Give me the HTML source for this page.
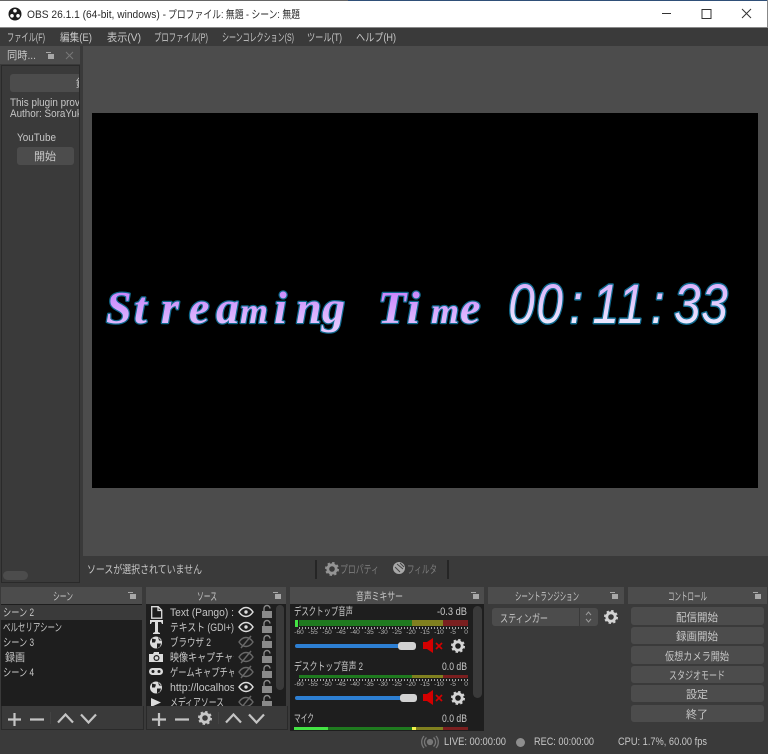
<!DOCTYPE html>
<html><head><meta charset="utf-8">
<style>
html,body{margin:0;padding:0;background:#3a3a3a}
#r{position:relative;width:768px;height:754px;overflow:hidden;background:#3a3a3a;font-family:"Liberation Sans","Noto Sans CJK JP",sans-serif}
.a{position:absolute}
.p{background:#4c4c4c;border-radius:3px}
svg{position:absolute;left:0;top:0}
text{font-family:"Liberation Sans","Noto Sans CJK JP",sans-serif;font-size:11px;fill:#c6c6c6}
.tt text,text.tt{fill:#2a2a2a}
.s text{font-size:6.500px;fill:#b4b4b4;text-anchor:middle}
.big text{font-family:"Liberation Serif",serif;font-style:italic;font-weight:bold;stroke:#0f6a8e;stroke-width:2.500px;paint-order:stroke;stroke-linejoin:round}
.big text.d{font-family:"Liberation Sans",sans-serif;font-weight:normal;stroke-width:3px}
</style></head><body>
<div id="r">
<div class="a" style="left:0;top:0;width:768px;height:28px;background:#fff"></div>
<div class="a" style="left:0;top:0;width:348px;height:1px;background:#666"></div>
<div class="a" style="left:348px;top:0;width:420px;height:1px;background:#2f4f78"></div>
<div class="a" style="left:0;top:27px;width:768px;height:1px;background:#8a8a8a"></div>
<div class="a" style="left:767px;top:0;width:1px;height:28px;background:#888"></div>
<div class="a" style="left:83px;top:46px;width:685px;height:510px;background:#4c4c4c"></div>
<div class="a" style="left:92px;top:113px;width:666px;height:375px;background:#000"></div>
<div class="a" style="left:0;top:46px;width:80px;height:18px;background:#4c4c4c"></div>
<div class="a" style="left:1px;top:65px;width:77px;height:516px;background:#3a3a3a;border:1px solid #2a2a2a"></div>
<div class="a p" style="left:10px;top:74px;width:69px;height:18px;border-radius:3px 0 0 3px"></div>
<div class="a p" style="left:17px;top:147px;width:57px;height:18px"></div>
<div class="a" style="left:3px;top:571px;width:25px;height:9px;background:#4c4c4c;border-radius:5px"></div>
<div class="a" style="left:315px;top:560px;width:2px;height:19px;background:#252525"></div>
<div class="a" style="left:447px;top:560px;width:2px;height:19px;background:#252525"></div>
<div class="a" style="left:1px;top:587px;width:141px;height:17px;background:#4c4c4c"></div>
<div class="a" style="left:146px;top:587px;width:140px;height:17px;background:#4c4c4c"></div>
<div class="a" style="left:290px;top:587px;width:194px;height:17px;background:#4c4c4c"></div>
<div class="a" style="left:488px;top:587px;width:136px;height:17px;background:#4c4c4c"></div>
<div class="a" style="left:628px;top:587px;width:139px;height:17px;background:#4c4c4c"></div>
<div class="a" style="left:1px;top:604px;width:141px;height:102px;background:#1e1e1e"></div>
<div class="a" style="left:1px;top:605px;width:141px;height:15px;background:#3a3a3a"></div>
<div class="a" style="left:1px;top:706px;width:141px;height:23px;border:1px solid #2a2a2a;border-top:0"></div>
<div class="a" style="left:146px;top:604px;width:140px;height:102px;background:#1e1e1e"></div>
<div class="a" style="left:276px;top:605px;width:8px;height:85px;background:#3a3a3a;border-radius:4px"></div>
<div class="a" style="left:146px;top:706px;width:140px;height:23px;border:1px solid #2a2a2a;border-top:0"></div>
<div class="a" style="left:290px;top:604px;width:194px;height:127px;background:#1e1e1e"></div>
<div class="a" style="left:473px;top:606px;width:9px;height:92px;background:#3a3a3a;border-radius:5px"></div>
<!-- meters -->
<div class="a" style="left:299px;top:620px;width:113px;height:6px;background:#1f7a1f"></div>
<div class="a" style="left:412px;top:620px;width:31px;height:6px;background:#80801f"></div>
<div class="a" style="left:443px;top:620px;width:25px;height:6px;background:#7a1f1f"></div>
<div class="a" style="left:295px;top:620px;width:3px;height:7px;background:#44e444"></div>
<div class="a" style="left:299px;top:627px;width:169px;height:2px;background:repeating-linear-gradient(90deg,#aaa 0 1px,transparent 1px 3px)"></div>
<div class="a" style="left:295px;top:644px;width:105px;height:4px;background:#2d7fd3;border-radius:2px"></div>
<div class="a" style="left:398px;top:642px;width:18px;height:8px;background:#d2d2d2;border-radius:3px"></div>
<div class="a" style="left:299px;top:675px;width:113px;height:3px;background:#1f7a1f"></div>
<div class="a" style="left:412px;top:675px;width:31px;height:3px;background:#80801f"></div>
<div class="a" style="left:443px;top:675px;width:25px;height:3px;background:#7a1f1f"></div>
<div class="a" style="left:299px;top:679px;width:169px;height:2px;background:repeating-linear-gradient(90deg,#aaa 0 1px,transparent 1px 3px)"></div>
<div class="a" style="left:295px;top:696px;width:107px;height:4px;background:#2d7fd3;border-radius:2px"></div>
<div class="a" style="left:400px;top:694px;width:17px;height:8px;background:#d2d2d2;border-radius:3px"></div>
<div class="a" style="left:294px;top:727px;width:34px;height:3px;background:#44e444"></div>
<div class="a" style="left:328px;top:727px;width:84px;height:3px;background:#1f7a1f"></div>
<div class="a" style="left:412px;top:727px;width:4px;height:3px;background:#f2f24a"></div>
<div class="a" style="left:416px;top:727px;width:27px;height:3px;background:#80801f"></div>
<div class="a" style="left:443px;top:727px;width:25px;height:3px;background:#7a1f1f"></div>
<!-- transition + controls -->
<div class="a p" style="left:492px;top:608px;width:106px;height:18px"></div>
<div class="a" style="left:579px;top:608px;width:1px;height:18px;background:#3a3a3a"></div>
<div class="a p" style="left:631px;top:607px;width:133px;height:18px"></div>
<div class="a p" style="left:631px;top:627px;width:133px;height:17px"></div>
<div class="a p" style="left:631px;top:646px;width:133px;height:18px"></div>
<div class="a p" style="left:631px;top:666px;width:133px;height:17px"></div>
<div class="a p" style="left:631px;top:685px;width:133px;height:17px"></div>
<div class="a p" style="left:631px;top:705px;width:133px;height:17px"></div>
<div class="a" style="left:516px;top:737.5px;width:9px;height:9px;border-radius:50%;background:#8e8e8e"></div>

<svg width="768" height="754" viewBox="0 0 768 754">
<defs>
<linearGradient id="g1" x1="0" y1="0" x2=".15" y2="1"><stop offset="0" stop-color="#c274fb"/><stop offset="1" stop-color="#e4c8ff"/></linearGradient>
<linearGradient id="g2" x1="0" y1="0" x2="0" y2="1"><stop offset="0" stop-color="#d6a4fb"/><stop offset="1" stop-color="#f0f8ff"/></linearGradient>
<clipPath id="cl"><rect x="0" y="60" width="79" height="100"/></clipPath>
<clipPath id="cs"><rect x="146" y="604" width="88" height="102"/></clipPath>
<clipPath id="ci"><rect x="146" y="604" width="130" height="102"/></clipPath>
<g id="gear"><circle r="4.200" fill="none" stroke="currentColor" stroke-width="2.800"/><circle r="6" fill="none" stroke="currentColor" stroke-width="2" stroke-dasharray="2.400 2.310"/></g>
<g id="eye" fill="none" stroke="#dcdcdc" stroke-width="1.500"><path d="M-7 0c4-6 10-6 14 0-4 6-10 6-14 0z"/><circle r="1.700" fill="#dcdcdc" stroke="none"/></g>
<g id="eyeoff" fill="none" stroke="#686868" stroke-width="1.400"><path d="M-7 0c4-6 10-6 14 0-4 6-10 6-14 0zM-5 6L5-6"/></g>
<g id="lock"><rect x="-5" y="-1" width="10" height="7" fill="#8a8a8a"/><path d="M-3 -1v-2.500a3 3 0 0 1 6 0" fill="none" stroke="#8a8a8a" stroke-width="1.400"/></g>
<path id="fl" d="M0 0h5v1H0zM2 2h6v5H2z" fill="#a8a8a8"/>
<g id="globe"><circle r="6" fill="#dcdcdc"/><path d="M-4-4l4 1-1 3-3 0zM1 1l4 0-1 3-3 2zM2-6l2 3 2 1-3 0z" fill="#1e1e1e"/></g>
</defs>

<!-- title bar -->
<circle cx="15" cy="14" r="6.500" fill="#1b1b1b"/><circle cx="15" cy="10.800" r="1.800" fill="#fff"/><circle cx="12" cy="15.800" r="1.800" fill="#fff"/><circle cx="18" cy="15.800" r="1.800" fill="#fff"/><circle cx="15" cy="14" r="1.600" fill="#1b1b1b"/>
<text class="tt" x="27" y="18" textLength="139" lengthAdjust="spacingAndGlyphs">OBS 26.1.1 (64-bit, windows) -</text>
<text class="tt" x="168" y="18" textLength="132" lengthAdjust="spacingAndGlyphs">プロファイル: 無題 - シーン: 無題</text>
<path d="M662 13.500H671M702 9.500h9v9h-9zM742 9L751 18M751 9L742 18" stroke="#333" fill="none"/>

<!-- menu -->
<text x="7" y="41" textLength="38" lengthAdjust="spacingAndGlyphs">ファイル(F)</text>
<text x="60" y="41" textLength="32" lengthAdjust="spacingAndGlyphs">編集(E)</text>
<text x="107" y="41" textLength="34" lengthAdjust="spacingAndGlyphs">表示(V)</text>
<text x="154" y="41" textLength="54" lengthAdjust="spacingAndGlyphs">プロファイル(P)</text>
<text x="222" y="41" textLength="72" lengthAdjust="spacingAndGlyphs">シーンコレクション(S)</text>
<text x="307" y="41" textLength="35" lengthAdjust="spacingAndGlyphs">ツール(T)</text>
<text x="356" y="41" textLength="40" lengthAdjust="spacingAndGlyphs">ヘルプ(H)</text>

<!-- preview -->
<g class="big">
<text y="323" style="font-size:46px;fill:url(#g1)" x="106 134 161 189 216"><tspan>Strea</tspan><tspan x="240" style="font-size:36px">m</tspan><tspan x="274 296 322">ing</tspan></text>
<text y="323" style="font-size:46px;fill:url(#g1)" x="378 407"><tspan>Ti</tspan><tspan x="431" style="font-size:36px">m</tspan><tspan x="460">e</tspan></text>
<text class="d" transform="scale(.85 1)" y="323" style="font-size:56px;fill:url(#g2)" x="598 631 670 697 727 766 793 825">00:11:33</text>
</g>

<!-- left dock -->
<text x="7" y="59" textLength="29" lengthAdjust="spacingAndGlyphs">同時...</text>
<use href="#fl" x="46" y="52"/>
<path d="M66 52l7 7M73 52l-7 7" stroke="#777" fill="none"/>
<g clip-path="url(#cl)">
<text x="76" y="87">録画</text>
<text x="10" y="106" textLength="88" lengthAdjust="spacingAndGlyphs">This plugin provides</text>
<text x="10" y="117" textLength="74" lengthAdjust="spacingAndGlyphs">Author: SoraYuki</text>
</g>
<text x="17" y="141" textLength="39" lengthAdjust="spacingAndGlyphs">YouTube</text>
<text x="34" y="160">開始</text>

<!-- controls bar -->
<text x="87" y="573" textLength="115" lengthAdjust="spacingAndGlyphs">ソースが選択されていません</text>
<use href="#gear" x="332" y="569" style="color:#949494"/>
<text x="340" y="573" textLength="39" lengthAdjust="spacingAndGlyphs" style="fill:#7c7c7c">プロパティ</text>
<circle cx="399" cy="568" r="6" fill="#a8a8a8"/><path d="M395 567l5 5M397 564l6 5M400 563l4 4" stroke="#444"/>
<text x="407" y="573" textLength="30" lengthAdjust="spacingAndGlyphs" style="fill:#7c7c7c">フィルタ</text>

<!-- dock titles -->
<text x="53" y="600" textLength="20" lengthAdjust="spacingAndGlyphs">シーン</text>
<text x="197" y="600" textLength="20" lengthAdjust="spacingAndGlyphs">ソース</text>
<text x="356" y="600" textLength="47" lengthAdjust="spacingAndGlyphs">音声ミキサー</text>
<text x="515" y="600" textLength="64" lengthAdjust="spacingAndGlyphs">シーントランジション</text>
<text x="668" y="600" textLength="39" lengthAdjust="spacingAndGlyphs">コントロール</text>
<use href="#fl" x="128" y="592"/><use href="#fl" x="273" y="592"/><use href="#fl" x="471" y="592"/><use href="#fl" x="610" y="592"/><use href="#fl" x="753" y="592"/>

<!-- scenes -->
<text x="3" y="616" textLength="31" lengthAdjust="spacingAndGlyphs">シーン 2</text>
<text x="3" y="631" textLength="59" lengthAdjust="spacingAndGlyphs">ベルセリアシーン</text>
<text x="3" y="646" textLength="31" lengthAdjust="spacingAndGlyphs">シーン 3</text>
<text x="5" y="661" textLength="20" lengthAdjust="spacingAndGlyphs">録画</text>
<text x="3" y="676" textLength="31" lengthAdjust="spacingAndGlyphs">シーン 4</text>

<!-- toolbars -->
<g fill="none" stroke="#c4c4c4" stroke-width="2.200">
<path d="M14.500 713v13M8 719.500h13M30 719.500h14M58 722.500l7.500-8 7.500 8M81 714.500l7.500 8 7.500-8"/>
<path d="M159 713v13M152 719.500h14M175 719.500h14M226 722.500l7.500-8 7.500 8M249 714.500l7.500 8 7.500-8"/>
</g>
<use href="#gear" x="205" y="718" style="color:#c8c8c8"/>
<path d="M50.500 712v12M218.500 712v12" stroke="#444"/>

<!-- sources -->
<g clip-path="url(#cs)">
<text x="170" y="616" textLength="64" lengthAdjust="spacingAndGlyphs">Text (Pango) :</text>
<text x="170" y="631" textLength="64" lengthAdjust="spacingAndGlyphs">テキスト (GDI+)</text>
<text x="170" y="646" textLength="41" lengthAdjust="spacingAndGlyphs">ブラウザ 2</text>
<text x="170" y="661" textLength="99" lengthAdjust="spacingAndGlyphs">映像キャプチャデバイス</text>
<text x="170" y="676" textLength="66" lengthAdjust="spacingAndGlyphs">ゲームキャプチャ</text>
<text x="170" y="691" textLength="68" lengthAdjust="spacingAndGlyphs">http://localhost</text>
<text x="170" y="706" textLength="54" lengthAdjust="spacingAndGlyphs">メディアソース</text>
</g>
<g clip-path="url(#ci)">
<path d="M151.700 606.700h6.500l3.500 3.500v8h-10zM158 606.700v3.800h3.700" fill="none" stroke="#dcdcdc" stroke-width="1.300"/>
<path d="M150 620h13v4h-1l-1-2h-3v10l2 1v1h-7v-1l2-1v-10h-3l-1 2h-1z" fill="#dcdcdc"/>
<use href="#globe" x="156" y="642.500"/>
<path d="M149 654h4l1-2h5v2h4v8h-14z" fill="#dcdcdc"/><circle cx="156.500" cy="658" r="3" fill="#1e1e1e"/><circle cx="156.500" cy="658" r="1.800" fill="#dcdcdc"/>
<rect x="149" y="668" width="14" height="7" rx="3.500" fill="#dcdcdc"/><circle cx="153" cy="671.500" r="1.500" fill="#1e1e1e"/><circle cx="159" cy="671.500" r="1.500" fill="#1e1e1e"/>
<use href="#globe" x="156" y="687.500"/>
<path d="M151 698l10 4.500-10 4.500z" fill="#dcdcdc"/>
<use href="#eye" x="246" y="612"/><use href="#eye" x="246" y="627"/><use href="#eyeoff" x="246" y="642"/><use href="#eyeoff" x="246" y="657"/><use href="#eyeoff" x="246" y="672"/><use href="#eye" x="246" y="687"/><use href="#eyeoff" x="246" y="702"/>
<use href="#lock" x="267" y="612"/><use href="#lock" x="267" y="627"/><use href="#lock" x="267" y="642"/><use href="#lock" x="267" y="657"/><use href="#lock" x="267" y="672"/><use href="#lock" x="267" y="687"/><use href="#lock" x="267" y="702"/>
</g>

<!-- mixer -->
<text x="294" y="615" textLength="59" lengthAdjust="spacingAndGlyphs">デスクトップ音声</text>
<text x="437" y="615" textLength="30" lengthAdjust="spacingAndGlyphs">-0.3 dB</text>
<text x="294" y="670" textLength="69" lengthAdjust="spacingAndGlyphs">デスクトップ音声 2</text>
<text x="442" y="670" textLength="25" lengthAdjust="spacingAndGlyphs">0.0 dB</text>
<text x="294" y="722" textLength="20" lengthAdjust="spacingAndGlyphs">マイク</text>
<text x="442" y="722" textLength="25" lengthAdjust="spacingAndGlyphs">0.0 dB</text>
<g class="s">
<text x="299" y="634">-60</text><text x="313" y="634">-55</text><text x="327" y="634">-50</text><text x="341" y="634">-45</text><text x="355" y="634">-40</text><text x="369" y="634">-35</text><text x="383" y="634">-30</text><text x="397" y="634">-25</text><text x="411" y="634">-20</text><text x="425" y="634">-15</text><text x="439" y="634">-10</text><text x="453" y="634">-5</text><text x="466" y="634">0</text>
<text x="299" y="686">-60</text><text x="313" y="686">-55</text><text x="327" y="686">-50</text><text x="341" y="686">-45</text><text x="355" y="686">-40</text><text x="369" y="686">-35</text><text x="383" y="686">-30</text><text x="397" y="686">-25</text><text x="411" y="686">-20</text><text x="425" y="686">-15</text><text x="439" y="686">-10</text><text x="453" y="686">-5</text><text x="466" y="686">0</text>
</g>
<path d="M423 642h4l6-4v15l-6-4h-4zM423 694h4l6-4v15l-6-4h-4z" fill="#d40000"/>
<path d="M436 643l6 6M442 643l-6 6M436 695l6 6M442 695l-6 6" stroke="#d40000" stroke-width="1.700"/>
<use href="#gear" x="458" y="646" style="color:#d4d4d4"/><use href="#gear" x="458" y="698" style="color:#d4d4d4"/>

<!-- transition -->
<text x="500" y="622" textLength="48" lengthAdjust="spacingAndGlyphs">スティンガー</text>
<path d="M586 615l2.500-3 2.500 3M586 619l2.500 3 2.500-3" fill="none" stroke="#999"/>
<use href="#gear" x="611" y="617" style="color:#d4d4d4"/>

<!-- controls -->
<text x="676" y="621" textLength="42" lengthAdjust="spacingAndGlyphs">配信開始</text>
<text x="676" y="640" textLength="42" lengthAdjust="spacingAndGlyphs">録画開始</text>
<text x="665" y="660" textLength="64" lengthAdjust="spacingAndGlyphs">仮想カメラ開始</text>
<text x="669" y="679" textLength="56" lengthAdjust="spacingAndGlyphs">スタジオモード</text>
<text x="686" y="698" textLength="22" lengthAdjust="spacingAndGlyphs">設定</text>
<text x="686" y="718" textLength="22" lengthAdjust="spacingAndGlyphs">終了</text>

<!-- status -->
<g fill="none" stroke="#777" stroke-width="1.300"><circle cx="430" cy="742" r="2.500" fill="#777"/><path d="M426.500 737.500a6 6 0 0 0 0 9M433.500 737.500a6 6 0 0 1 0 9M424 736a9 9 0 0 0 0 12M436 736a9 9 0 0 1 0 12"/></g>
<text x="444" y="745" textLength="62" lengthAdjust="spacingAndGlyphs">LIVE: 00:00:00</text>
<text x="534" y="745" textLength="60" lengthAdjust="spacingAndGlyphs">REC: 00:00:00</text>
<text x="618" y="745" textLength="89" lengthAdjust="spacingAndGlyphs">CPU: 1.7%, 60.00 fps</text>
</svg>
</div>
</body></html>
